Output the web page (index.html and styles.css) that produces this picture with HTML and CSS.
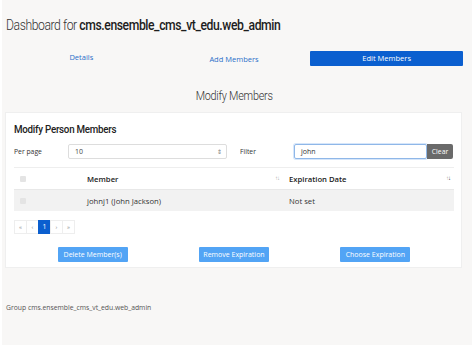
FILE: index.html
```html
<!DOCTYPE html>
<html>
<head>
<meta charset="utf-8">
<link rel="stylesheet" href="styles.css">
</head>
<body>
<div class="page">
  <h1 class="title"><span class="narrow"><span class="light">Dashboard for</span> <span class="strong">cms.ensemble_cms_vt_edu.web_admin</span></span></h1>
  <nav class="tabs">
    <a class="tab">Details</a>
    <a class="tab">Add Members</a>
    <a class="tab active">Edit Members</a>
  </nav>
  <h2 class="section"><span class="narrow">Modify Members</span></h2>
  <div class="card">
    <h3 class="card-title"><span class="narrow">Modify Person Members</span></h3>
    <div class="controls">
      <label class="lbl">Per page</label>
      <div class="select"><span>10</span><span class="caret">&#8661;</span></div>
      <label class="lbl filter-lbl">Filter</label>
      <div class="search"><div class="input">john</div><button class="clear">Clear</button></div>
    </div>
    <table class="tbl">
      <thead>
        <tr>
          <th class="c-check"><span class="box"></span></th>
          <th class="c-member">Member<span class="sort">↑↓</span></th>
          <th class="c-exp">Expiration Date<span class="sort dark">↑<b>↓</b></span></th>
        </tr>
      </thead>
      <tbody>
        <tr class="odd">
          <td class="c-check"><span class="box"></span></td>
          <td class="c-member">johnj1 (John Jackson)</td>
          <td class="c-exp">Not set</td>
        </tr>
      </tbody>
    </table>
    <ul class="pager">
      <li>«</li><li>‹</li><li class="on">1</li><li>›</li><li>»</li>
    </ul>
    <div class="actions">
      <button class="btn">Delete Member(s)</button>
      <button class="btn">Remove Expiration</button>
      <button class="btn">Choose Expiration</button>
    </div>
  </div>
  <p class="footer">Group cms.ensemble_cms_vt_edu.web_admin</p>
</div>
</body>
</html>
```
FILE: styles.css
```css
html, body { margin: 0; padding: 0; background: #ffffff; }
body { font-family: "Open Sans", "Liberation Sans", sans-serif; color: #333; }
.page {
  background: #f8f7f6;
  margin: 0 2px;
  padding: 17px 9px 0 3px;
  height: 345px;
  box-sizing: border-box;
}
.narrow { display: inline-block; white-space: nowrap; }
.title {
  margin: 0 0 0 1px;
  font-family: "Roboto", sans-serif;
  font-size: 14.5px;
  line-height: 18px;
  font-weight: normal;
  letter-spacing: -0.5px;
  color: #222;
}
.title .narrow { transform: scaleX(0.84); transform-origin: left center; }
.title .light { font-weight: 300; color: #333; }
.title .strong { font-weight: 500; color: #1d1d1d; }
.tabs {
  display: grid;
  grid-template-columns: 1fr 1fr 1fr;
  margin-top: 16px;
  height: 15px;
  align-items: center;
}
.tab {
  text-align: center;
  font-size: 7.5px;
  color: #2a6fc9;
}
.tab:first-child { margin-top: -3px; }
.tab.active {
  background: #0b5fcf;
  color: #fff;
  height: 15px;
  line-height: 15px;
  border-radius: 1px;
}
.section {
  margin: 21px 0 0;
  text-align: center;
  font-family: "Roboto", sans-serif;
  font-weight: 300;
  font-size: 13.5px;
  line-height: 17px;
  color: #333;
  letter-spacing: -0.3px;
}
.section .narrow { transform: scaleX(0.8); transform-origin: center; }
.card {
  margin-top: 8px;
  width: 457px;
  box-sizing: border-box;
  background: #fff;
  border: 1px solid #efefef;
  padding: 9px 7px 5px 8px;
}
.card-title {
  margin: 0;
  font-family: "Roboto", sans-serif;
  font-size: 11.5px;
  line-height: 15px;
  font-weight: 500;
  color: #222;
  letter-spacing: -0.3px;
}
.card-title .narrow { transform: scaleX(0.85); transform-origin: left center; }
.controls {
  display: flex;
  align-items: center;
  margin-top: 7px;
  height: 15px;
}
.lbl { font-size: 6.8px; color: #333; }
.lbl:first-child { width: 54px; }
.select {
  width: 159px;
  height: 15px;
  box-sizing: border-box;
  border: 1px solid #ddd;
  border-radius: 2px;
  display: flex;
  justify-content: space-between;
  align-items: center;
  padding: 0 4px 0 6px;
  font-size: 7px;
  color: #444;
}
.caret { font-size: 6px; color: #777; }
.filter-lbl { margin-left: 13px; width: 54px; }
.search { display: flex; height: 15px; }
.input {
  width: 133px;
  height: 15px;
  box-sizing: border-box;
  border: 1px solid #8fb7e8;
  box-shadow: 0 0 0 1px #d6e6fa;
  border-radius: 2px;
  padding-left: 6px;
  font-size: 7px;
  line-height: 13px;
  color: #333;
}
.clear {
  width: 26px;
  height: 15px;
  border: none;
  background: #6a6a6a;
  color: #fff;
  font-family: "Open Sans", sans-serif;
  font-size: 6.8px;
  padding: 0;
  border-radius: 0 2px 2px 0;
}
.tbl {
  margin-top: 8px;
  width: 440px;
  border-collapse: collapse;
  font-size: 7.7px;
  border-top: 1px solid #eeeeee;
}
.tbl th, .tbl td {
  height: 21px;
  padding: 0;
  text-align: left;
  vertical-align: middle;
}
.tbl th { font-weight: 600; color: #222; border-bottom: 1px solid #e8e8e8; }
.tbl td { color: #333; }
.tbl tr.odd { background: #f2f2f2; }
.c-check { width: 67px; padding-left: 6px !important; }
.c-member { width: 202px; position: relative; }
.sort {
  position: absolute;
  right: 10px;
  top: 6px;
  font-size: 6px;
  letter-spacing: -1px;
  color: #aaa;
  font-weight: normal;
}
.c-exp .sort { right: 4px; }
.sort.dark b { color: #333; font-weight: normal; }
.c-exp { position: relative; }
.box {
  display: inline-block;
  width: 6px;
  height: 6px;
  background: #e4e4e4;
  border-radius: 1px;
}
.pager {
  list-style: none;
  margin: 9px 0 0;
  padding: 0;
  display: flex;
  height: 14px;
}
.pager li {
  width: 13px;
  height: 14px;
  box-sizing: border-box;
  border: 1px solid #eeeeee;
  margin-left: -1px;
  font-size: 6px;
  line-height: 12px;
  text-align: center;
  color: #888;
}
.pager li:first-child { margin-left: 0; }
.pager li.on { background: #0b5fcf; color: #fff; border-color: #0b5fcf; font-size: 7px; }
.actions {
  display: grid;
  grid-template-columns: 1fr 1fr 1fr;
  margin: 13px 8px 0;
  justify-items: center;
}
.btn {
  height: 15px;
  width: 70px;
  border: none;
  background: #52a4f5;
  color: #fff;
  font-family: "Open Sans", sans-serif;
  font-size: 7px;
  padding: 0;
  border-radius: 1px;
}
.footer {
  margin: 35px 0 0 1px;
  font-size: 6.8px;
  color: #555;
}
```
